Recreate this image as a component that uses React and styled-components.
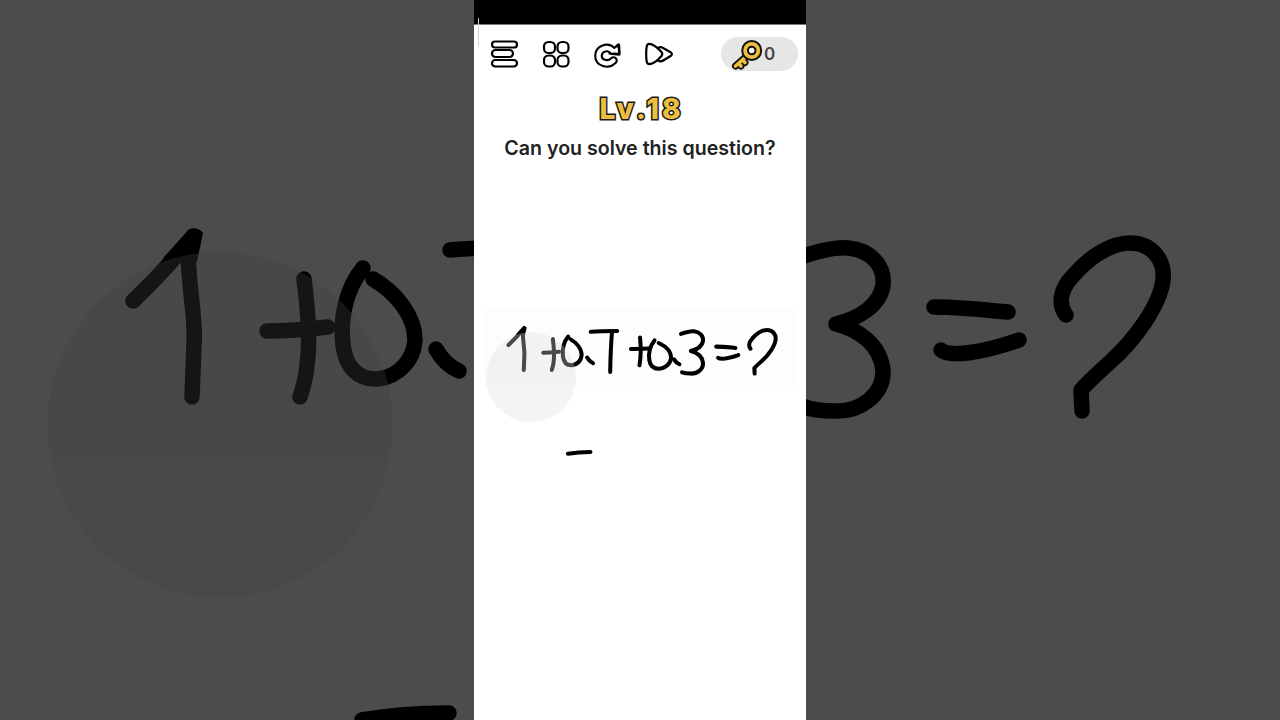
import styled, {createGlobalStyle} from "styled-components";

const GlobalStyle = createGlobalStyle`
  html,
  body {
    margin: 0;
    background: #4d4d4d;
  }
`;

const Page = styled.div`
  position: relative;
  width: 1280px;
  height: 720px;
  overflow: hidden;
  display: flex;
  justify-content: center;
  font-family: "Inter", "Liberation Sans", sans-serif;
`;

// the same video frame, enlarged and dimmed behind the phone column
const Backdrop = styled.div`
  position: absolute;
  inset: 0;
  background: #fff;

  &::after {
    content: "";
    position: absolute;
    inset: 0;
    background: rgba(0, 0, 0, 0.7);
  }
`;

const Stage = styled.main`
  position: relative;
  width: 332px;
  height: 720px;
  background: #fff;
  display: flex;
  flex-direction: column;
`;

const StatusBar = styled.div`
  height: 24px;
  background: #000;
  border-bottom: 1px solid #777;
  flex: none;
`;

const Tick = styled.span`
  position: absolute;
  top: 18px;
  left: 4px;
  width: 1px;
  height: 28px;
  background: #d4d4d4;
`;

const Toolbar = styled.nav`
  display: flex;
  align-items: center;
  height: 34px;
  margin-top: 12px;
  padding: 0 8px 0 4px;
`;

const IconSlot = styled.button`
  width: 51.7px;
  height: 34px;
  padding: 0;
  border: none;
  background: none;
  display: flex;
  align-items: center;
  justify-content: center;
`;

const KeyPill = styled.div`
  margin-left: auto;
  width: 77px;
  height: 34px;
  border-radius: 17px;
  background: #e6e6e6;
  display: flex;
  align-items: center;
  gap: 1px;
  padding-left: 10px;
  box-sizing: border-box;
  color: #444;
  font-size: 17px;
  font-weight: 600;
`;

const Level = styled.h1`
  margin: 22px 0 0;
  padding-left: 3.2px;
  text-align: center;
  font-size: 28px;
  line-height: 32px;
  font-weight: 800;
  letter-spacing: 3.2px;
  color: #ecc03e;
  -webkit-text-stroke: 3px #1a1a1a;
  paint-order: stroke fill;
`;

const Question = styled.p`
  margin: 9px 0 0;
  text-align: center;
  font-size: 19.6px;
  line-height: 28px;
  font-weight: 600;
  color: #222;
`;

const Board = styled.div`
  margin-top: 104.6px;
  width: 332px;
  height: 186.75px;
  filter: blur(0.35px);

  svg {
    overflow: visible;
  }
`;

const SceneSvg = styled.svg`
  display: block;
  width: 100%;
  height: 100%;
`;

const strokes = [
  // 1
  "M133 301C150 285 172 262 193 236",
  "M188 255C190 300 196 320 194 345L192 397",
  // +
  "M304 279C308 310 310 345 307 365C306 378 303 388 300 397",
  "M267 331C290 331 310 329 328 327",
  // 0
  "M363 268C345 290 340 320 343 345C346 368 358 380 378 379C398 377 414 360 415 340C415 315 395 292 373 279",
  // .
  "M436 349C442 360 450 367 459 371",
  // 7
  "M450 250C485 247 520 247 552 247",
  "M532 250C528 300 526 350 525 405",
  // +
  "M640 272C643 300 644 345 638 379",
  "M605 316C625 316 650 315 676 314",
  // 0
  "M696 283C678 305 672 335 676 360C680 383 695 393 715 392C738 390 758 372 760 350C760 326 738 305 712 293",
  // .
  "M771 356C776 364 784 371 792 375",
  // 3
  "M798 258C815 252 835 247 848 248C870 250 885 265 883 285C880 305 860 318 836 324C860 330 880 345 883 370C884 395 860 412 835 411C825 411 812 410 802 406",
  // =
  "M934 307C960 307 985 310 1008 312",
  "M941 350C950 358 985 352 1019 340",
  // ?
  "M1066 315C1058 305 1060 290 1072 277C1088 258 1110 243 1130 243C1152 243 1165 260 1163 280C1160 305 1135 340 1110 362C1098 373 1088 382 1081 390L1082 411",
  // dash below the sum
  "M362 720C385 716 420 713 449 713",
];

const Scene = () => (
  <SceneSvg viewBox="0 0 1280 720" aria-label="1 + 0.7 + 0.3 = ?">
    <rect x="38" y="160" width="1202" height="300" fill="#fdfdfd"/>
    <g fill="none" stroke="#000" strokeWidth="15.5" strokeLinecap="round" strokeLinejoin="round">
      {strokes.map((d) => <path key={d} d={d}/>)}
    </g>
    {/* the heavy top of the 1 */}
    <path d="M163 258L186 233Q196 224 203 233L197 262Z" fill="#000"/>
    <circle cx="220" cy="425" r="173" fill="rgba(222,222,222,0.33)"/>
  </SceneSvg>
);

const MenuIcon = () => (
  <svg width="28" height="28" viewBox="0 0 28 28" fill="#fff" stroke="#000" strokeWidth="2.2">
    <rect x="2" y="1.5" width="25" height="6" rx="3"/>
    <rect x="2" y="10" width="21" height="7" rx="3.5"/>
    <rect x="2" y="20" width="25" height="6.5" rx="3.2"/>
  </svg>
);

const GridIcon = () => (
  <svg width="28" height="28" viewBox="0 0 28 28" fill="#fff" stroke="#000" strokeWidth="2.2">
    <rect x="2" y="2" width="11" height="11" rx="4.6"/>
    <rect x="15.5" y="2" width="11" height="11" rx="4.6"/>
    <rect x="2" y="15.5" width="11" height="11" rx="4.6"/>
    <rect x="15.5" y="15.5" width="11" height="11" rx="4.6"/>
  </svg>
);

const retryRing = "M19.5 10.5C14.5 5.5 5.5 8.5 5.5 16C5.5 23 15 26 20.5 20.5";

const RetryIcon = () => (
  <svg width="28" height="28" viewBox="0 0 28 28" fill="none" strokeLinecap="round" strokeLinejoin="round">
    <path d={retryRing} stroke="#000" strokeWidth="8.6"/>
    <path d="M25.5 5L26 14L17 13Z" fill="#000" stroke="#000" strokeWidth="3.4"/>
    <path d={retryRing} stroke="#fff" strokeWidth="4.4"/>
    <path d="M24 8L24.3 12L19.5 11.6Z" fill="#fff" stroke="#fff" strokeWidth="1.4"/>
  </svg>
);

const SkipIcon = () => (
  <svg width="28" height="24" viewBox="0 0 28 24" fill="#fff" stroke="#000" strokeWidth="2.2" strokeLinejoin="round">
    <path d="M13 6C15 4.5 17 5 19 6.5L26 10.5Q27.8 12 26 13.8L19 18C17 19.5 15 20 13 18.5Z"/>
    <path d="M4 1.8C8 1.8 13 6 16.5 10Q18 12 16.5 14C13 18 8 22.2 4 22.2C1.5 22.2 1.2 18 1.2 12C1.2 6 1.5 1.8 4 1.8Z"/>
  </svg>
);

const KeyIcon = () => (
  <svg width="32" height="32" viewBox="0 0 32 32" fill="none" strokeLinecap="round" strokeLinejoin="round">
    <path d="M17 17L4.5 28M7.5 25.5L10 28M11.5 22L14 24.5" stroke="#111" strokeWidth="7"/>
    <path d="M17 17L4.5 28M7.5 25.5L10 28M11.5 22L14 24.5" stroke="#ecc03e" strokeWidth="3.6"/>
    <circle cx="20.7" cy="12.5" r="9.5" fill="#ecc03e" stroke="#111" strokeWidth="2"/>
    <circle cx="20.7" cy="12.5" r="3.8" fill="#f4f4f4" stroke="#111" strokeWidth="2"/>
  </svg>
);

const App = () => (
  <>
    <GlobalStyle/>
    <Page>
      <Backdrop>
        <Scene/>
      </Backdrop>
      <Stage>
        <StatusBar/>
        <Tick/>
        <Toolbar>
          <IconSlot><MenuIcon/></IconSlot>
          <IconSlot><GridIcon/></IconSlot>
          <IconSlot><RetryIcon/></IconSlot>
          <IconSlot><SkipIcon/></IconSlot>
          <KeyPill><KeyIcon/>0</KeyPill>
        </Toolbar>
        <Level>Lv.18</Level>
        <Question>Can you solve this question?</Question>
        <Board>
          <Scene/>
        </Board>
      </Stage>
    </Page>
  </>
);

export default App;
